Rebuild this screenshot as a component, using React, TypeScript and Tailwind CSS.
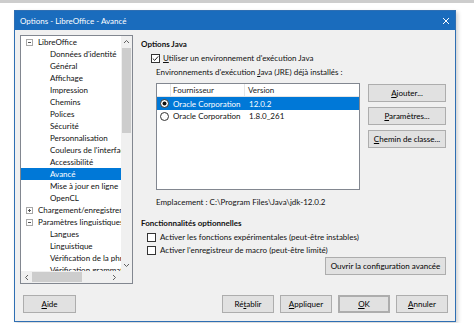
import React from 'react';

const font = { fontFamily: 'Lato, "Noto Sans", sans-serif' };

type TreeRow = { label: string; level: 1 | 2; expander?: 'minus' | 'plus'; selected?: boolean };

const rows: TreeRow[] = [
  { label: 'LibreOffice', level: 1, expander: 'minus' },
  { label: "Données d'identité", level: 2 },
  { label: 'Général', level: 2 },
  { label: 'Affichage', level: 2 },
  { label: 'Impression', level: 2 },
  { label: 'Chemins', level: 2 },
  { label: 'Polices', level: 2 },
  { label: 'Sécurité', level: 2 },
  { label: 'Personnalisation', level: 2 },
  { label: "Couleurs de l'interface", level: 2 },
  { label: 'Accessibilité', level: 2 },
  { label: 'Avancé', level: 2, selected: true },
  { label: 'Mise à jour en ligne', level: 2 },
  { label: 'OpenCL', level: 2 },
  { label: 'Chargement/enregistrement', level: 1, expander: 'plus' },
  { label: 'Paramètres linguistiques', level: 1, expander: 'minus' },
  { label: 'Langues', level: 2 },
  { label: 'Linguistique', level: 2 },
  { label: 'Vérification de la phrase', level: 2 },
  { label: 'Vérification grammaticale', level: 2 },
];

const Expander = ({ kind }: { kind: 'minus' | 'plus' }) => (
  <svg width="7" height="7" viewBox="0 0 7 7" className="shrink-0">
    <rect x="0.5" y="0.5" width="6" height="6" fill="white" stroke="#a8a8a8" />
    <line x1="2" y1="3.5" x2="5" y2="3.5" stroke="#555" />
    {kind === 'plus' && <line x1="3.5" y1="2" x2="3.5" y2="5" stroke="#555" />}
  </svg>
);

const Check = ({ checked }: { checked?: boolean }) => (
  <div className="w-[9px] h-[9px] border border-[#333] bg-white flex items-center justify-center shrink-0">
    {checked && (
      <svg width="7" height="7" viewBox="0 0 7 7">
        <path d="M0.8 3.6 L2.7 5.4 L6.2 1.4" fill="none" stroke="#222" strokeWidth="1" />
      </svg>
    )}
  </div>
);

const Radio = ({ on }: { on?: boolean }) => (
  <svg width="9" height="9" viewBox="0 0 9 9">
    <circle cx="4.5" cy="4.5" r="4" fill="white" stroke="#333" />
    {on && <circle cx="4.5" cy="4.5" r="2" fill="#111" />}
  </svg>
);

const Btn = ({ children, className = '' }: { children: React.ReactNode; className?: string }) => (
  <div className={`h-[18px] bg-[#e1e1e1] border border-[#adadad] flex items-center justify-center text-[8px] text-black ${className}`}>
    {children}
  </div>
);

export default function App() {
  return (
    <div className="w-[474px] h-[323px] bg-white overflow-hidden text-[8px] text-[#111]" style={font}>
      <div className="h-[3px] bg-[#cdcdcd]" />
      <div className="ml-[14px] mt-[7px] w-[442px] h-[312px] border border-[#2f6fb3] bg-[#f0f0f0] flex flex-col shadow-[2px_2px_4px_rgba(0,0,0,0.18)]">
        {/* title bar */}
        <div className="h-[19px] bg-[#1a6cbd] flex items-center justify-between pl-[5px] pr-[5px] text-white text-[8px] shrink-0">
          <span>Options - LibreOffice - Avancé</span>
          <svg width="8" height="8" viewBox="0 0 8 8">
            <path d="M1 1 L7 7 M7 1 L1 7" stroke="white" strokeWidth="1" />
          </svg>
        </div>

        <div className="flex pl-[5px] pt-[5px]">
          {/* tree */}
          <div className="w-[113px] h-[249px] border border-[#828790] bg-white flex flex-col shrink-0">
            <div className="flex h-[235px]">
              <div className="w-[101px] overflow-hidden">
                {rows.map((r, i) => (
                  <div
                    key={i}
                    className={`h-[12px] flex items-center whitespace-nowrap ${r.selected ? 'bg-[#0078d7] text-white' : ''}`}
                  >
                    {r.level === 1 ? (
                      <div className="flex items-center pl-[5px] gap-[5px]">
                        {r.expander && <Expander kind={r.expander} />}
                        <span>{r.label}</span>
                      </div>
                    ) : (
                      <span className="pl-[29px]">{r.label}</span>
                    )}
                  </div>
                ))}
              </div>
              <div className="w-[11px] bg-[#f0f0f0] flex flex-col items-center">
                <svg width="7" height="8" viewBox="0 0 7 8" className="mt-[2px]">
                  <path d="M1 5 L3.5 2.5 L6 5" fill="none" stroke="#606060" />
                </svg>
                <div className="w-[9px] h-[85px] bg-[#cdcdcd] mt-[2px]" />
                <div className="flex-1" />
                <svg width="7" height="8" viewBox="0 0 7 8" className="mb-[2px]">
                  <path d="M1 3 L3.5 5.5 L6 3" fill="none" stroke="#606060" />
                </svg>
              </div>
            </div>
            <div className="flex h-[12px]">
              <div className="w-[101px] bg-[#f0f0f0] flex items-center">
                <svg width="8" height="7" viewBox="0 0 8 7" className="ml-[2px]">
                  <path d="M5 1 L2.5 3.5 L5 6" fill="none" stroke="#606060" />
                </svg>
                <div className="w-[50px] h-[10px] bg-[#cdcdcd] ml-[1px]" />
                <div className="flex-1" />
                <svg width="8" height="7" viewBox="0 0 8 7" className="mr-[3px]">
                  <path d="M3 1 L5.5 3.5 L3 6" fill="none" stroke="#606060" />
                </svg>
              </div>
              <div className="w-[11px] bg-[#f0f0f0]" />
            </div>
          </div>

          {/* right panel */}
          <div className="ml-[8px] flex flex-col">
            <div className="font-bold h-[12px] mt-[3px] flex items-center">Options Java</div>
            <div className="flex items-center gap-[3px] ml-[10px] mt-[2px] h-[12px]">
              <Check checked />
              <span><u>U</u>tiliser un environnement d'exécution Java</span>
            </div>
            <div className="ml-[15px] mt-[2px] h-[12px] flex items-center">
              <span>Environnements d'exécution <u>J</u>ava (JRE) déjà installés :</span>
            </div>
            <div className="flex mt-[5px] ml-[15px]">
              <div className="w-[204px] h-[107px] border border-[#828790] bg-white flex flex-col">
                <div className="h-[13px] flex border-b border-[#e5e5e5] text-[#222]">
                  <div className="w-[14px] border-r border-[#e5e5e5]" />
                  <div className="w-[74px] border-r border-[#e5e5e5] pl-[2px] flex items-center">Fournisseur</div>
                  <div className="pl-[3px] flex items-center">Version</div>
                </div>
                <div className="h-[13px] flex items-center bg-[#0078d7] text-white">
                  <div className="w-[14px] flex justify-center"><Radio on /></div>
                  <div className="w-[74px] pl-[2px]">Oracle Corporation</div>
                  <div className="pl-[4px]">12.0.2</div>
                </div>
                <div className="h-[12px] flex items-center">
                  <div className="w-[14px] flex justify-center"><Radio /></div>
                  <div className="w-[74px] pl-[2px]">Oracle Corporation</div>
                  <div className="pl-[4px]">1.8.0_261</div>
                </div>
              </div>
              <div className="ml-[8px] flex flex-col gap-[5px] mt-[1px]">
                <Btn className="w-[78px]"><span><u>A</u>jouter...</span></Btn>
                <Btn className="w-[78px]"><span><u>P</u>aramètres...</span></Btn>
                <Btn className="w-[78px]"><span><u>C</u>hemin de classe...</span></Btn>
              </div>
            </div>
            <div className="ml-[15px] mt-[6px] h-[12px] flex items-center">
              Emplacement : C:\Program Files\Java\jdk-12.0.2
            </div>
            <div className="font-bold mt-[9px] h-[12px] flex items-center">Fonctionnalités optionnelles</div>
            <div className="flex items-center gap-[4px] ml-[6px] mt-[2px] h-[12px]">
              <Check />
              <span>Activer les fonctions expérimentales (peut-être instables)</span>
            </div>
            <div className="flex items-center gap-[4px] ml-[6px] mt-[1px] h-[12px]">
              <Check />
              <span>Activer l'enregistreur de macro (peut-être limité)</span>
            </div>
            <div className="flex justify-end mt-[1px]">
              <Btn className="w-[121px] h-[17px]">Ouvrir la configuration avancée</Btn>
            </div>
          </div>
        </div>

        {/* bottom buttons */}
        <div className="flex items-center mt-[11px] pl-[8px]">
          <Btn className="w-[53px]"><span><u>A</u>ide</span></Btn>
          <div className="flex-1" />
          <div className="flex gap-[6px] pr-[7px]">
            <Btn className="w-[52px]"><span>Ré<u>t</u>ablir</span></Btn>
            <Btn className="w-[52px]"><span><u>A</u>ppliquer</span></Btn>
            <Btn className="w-[52px] border-[#0078d7] border-2"><span><u>O</u>K</span></Btn>
            <Btn className="w-[52px]"><span><u>A</u>nnuler</span></Btn>
          </div>
        </div>
      </div>
    </div>
  );
}
